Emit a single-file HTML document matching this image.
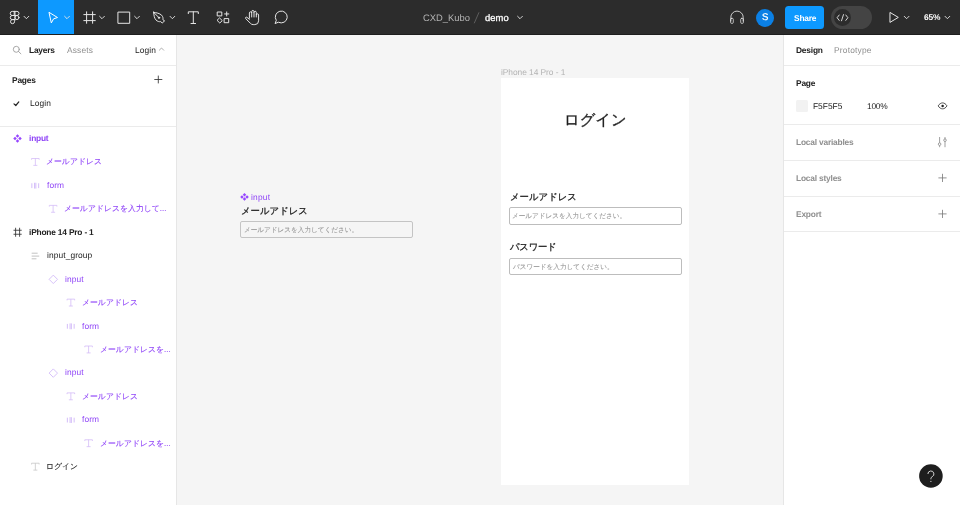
<!DOCTYPE html>
<html lang="ja">
<head>
<meta charset="utf-8">
<style>
*{box-sizing:border-box;margin:0;padding:0}
html,body{width:960px;height:505px;overflow:hidden;background:#f5f5f5;font-family:"Liberation Sans",sans-serif}
.a{position:absolute}
.t{position:absolute;white-space:nowrap;line-height:1;will-change:transform;text-rendering:geometricPrecision}
svg.ov{position:absolute;left:0;top:0;width:960px;height:505px;overflow:visible}
#top{left:0;top:0;width:960px;height:35px;background:#2c2c2c}
#lp{left:0;top:35px;width:177px;height:470px;background:#fff;border-right:1px solid #e6e6e6}
#rp{left:783px;top:35px;width:177px;height:470px;background:#fff;border-left:1px solid #e6e6e6}
.hr{position:absolute;height:1px;background:#ebebeb}
.ui{font-size:8.4px;color:#222;letter-spacing:0.1px}
.b{font-weight:bold;letter-spacing:-0.2px}
.g{color:#8f8f8f}
.p{color:#8f44f7}
.w{color:#fff}
.jl{font-size:9.4px;color:#262626;letter-spacing:0;-webkit-text-stroke:0.3px #262626}
.jp{letter-spacing:0;-webkit-text-stroke:0.1px currentColor}
</style>
</head>
<body>
<!-- TOP BAR -->
<div id="top" class="a">
  <div class="a" style="left:38px;top:0;width:35.5px;height:35px;background:#0d99ff"></div>
  <div class="a" style="left:0;top:34px;width:960px;height:1px;background:#1e1e1e"></div>
  <div class="t" style="left:422.7px;top:12.8px;font-size:9.4px;color:#b3b3b3;letter-spacing:0">CXD_Kubo</div>
  <div class="t w" style="left:484.7px;top:12.8px;font-size:9.4px;letter-spacing:0.05px;-webkit-text-stroke:0.3px #fff">demo</div>
  <div class="a" style="left:755.9px;top:8.5px;width:18px;height:18px;border-radius:50%;background:#0b80e5"></div>
  <div class="t w" style="left:761.8px;top:13.2px;font-size:9.6px;-webkit-text-stroke:0.25px #fff">S</div>
  <div class="a" style="left:784.75px;top:6px;width:39.7px;height:23.4px;border-radius:3.5px;background:#0d99ff"></div>
  <div class="t w b" style="left:793.7px;top:13.7px;font-size:8.4px">Share</div>
  <div class="a" style="left:830.9px;top:5.9px;width:41px;height:23.1px;border-radius:12px;background:#444"></div>
  <div class="a" style="left:833.9px;top:8.5px;width:17.5px;height:17.5px;border-radius:50%;background:#2c2c2c"></div>
  <div class="t w b" style="left:923.7px;top:13.4px;font-size:8.4px">65%</div>
</div>

<!-- LEFT PANEL -->
<div id="lp" class="a"></div>
<div class="hr" style="left:0;top:64.5px;width:176px"></div>
<div class="hr" style="left:0;top:126px;width:176px"></div>
<div class="t ui b" style="left:29.10px;top:45.82px;">Layers</div>
<div class="t ui g" style="left:67.00px;top:45.82px;letter-spacing:0.15px">Assets</div>
<div class="t ui" style="left:134.70px;top:45.82px;">Login</div>
<div class="t ui b" style="left:11.90px;top:75.77px;">Pages</div>
<div class="t ui" style="left:29.60px;top:99.27px;">Login</div>
<div class="t ui p b" style="left:29.10px;top:134.02px;">input</div>
<div class="t ui p jp" style="left:46.45px;top:158.22px;font-size:7.85px;">メールアドレス</div>
<div class="t ui p" style="left:46.85px;top:180.90px;">form</div>
<div class="t ui p jp" style="left:64.20px;top:205.10px;font-size:7.85px;">メールアドレスを入力して...</div>
<div class="t ui b" style="left:29.10px;top:227.78px;">iPhone 14 Pro - 1</div>
<div class="t ui" style="left:46.85px;top:251.22px;">input_group</div>
<div class="t ui p" style="left:64.60px;top:274.66px;">input</div>
<div class="t ui p jp" style="left:81.95px;top:298.86px;font-size:7.85px;">メールアドレス</div>
<div class="t ui p" style="left:82.35px;top:321.54px;">form</div>
<div class="t ui p jp" style="left:99.70px;top:345.74px;font-size:7.85px;">メールアドレスを...</div>
<div class="t ui p" style="left:64.60px;top:368.42px;">input</div>
<div class="t ui p jp" style="left:81.95px;top:392.62px;font-size:7.85px;">メールアドレス</div>
<div class="t ui p" style="left:82.35px;top:415.30px;">form</div>
<div class="t ui p jp" style="left:99.70px;top:439.50px;font-size:7.85px;">メールアドレスを...</div>
<div class="t ui jp" style="left:46.45px;top:462.94px;font-size:7.85px;">ログイン</div>

<!-- RIGHT PANEL -->
<div id="rp" class="a"></div>
<div class="hr" style="left:784px;top:64.5px;width:176px"></div>
<div class="hr" style="left:784px;top:124px;width:176px"></div>
<div class="hr" style="left:784px;top:159.5px;width:176px"></div>
<div class="hr" style="left:784px;top:195.7px;width:176px"></div>
<div class="hr" style="left:784px;top:231.2px;width:176px"></div>
<div class="a" style="left:795.5px;top:100.25px;width:12px;height:12px;background:#f2f2f2;border-radius:1.5px"></div>
<div class="t ui b" style="left:795.90px;top:45.82px;">Design</div>
<div class="t ui g" style="left:834.40px;top:45.82px;letter-spacing:0.2px">Prototype</div>
<div class="t ui b" style="left:795.90px;top:78.62px;">Page</div>
<div class="t ui" style="left:813.40px;top:102.12px;letter-spacing:0">F5F5F5</div>
<div class="t ui" style="left:866.90px;top:102.12px;letter-spacing:-0.25px">100%</div>
<div class="t ui b g" style="left:796.00px;top:138.02px;">Local variables</div>
<div class="t ui b g" style="left:796.00px;top:174.22px;">Local styles</div>
<div class="t ui b g" style="left:796.00px;top:210.42px;">Export</div>

<!-- CANVAS -->
<div class="t ui" style="left:501.00px;top:67.52px;color:#b3b3b3;letter-spacing:-0.05px">iPhone 14 Pro - 1</div>
<div class="t ui p" style="left:251.00px;top:192.92px;letter-spacing:0.2px">input</div>
<div class="a" style="left:501.3px;top:77.8px;width:188.1px;height:407.5px;background:#fff"></div>
<div class="t" style="left:563.7px;top:113px;font-size:15.3px;color:#1e1e1e;-webkit-text-stroke:0.3px #1e1e1e">ログイン</div>
<div class="t jl" style="left:509.6px;top:192px;">メールアドレス</div>
<div class="a" style="left:509.2px;top:207.1px;width:172.4px;height:17.5px;border:1px solid #bdbdbd;border-radius:2px"></div>
<div class="t" style="left:512.4px;top:214.3px;font-size:6.6px;color:#999;letter-spacing:0;-webkit-text-stroke:0.1px #999">メールアドレスを入力してください。</div>
<div class="t jl" style="left:510.2px;top:242.4px;letter-spacing:-0.28px">パスワード</div>
<div class="a" style="left:509.2px;top:257.8px;width:172.4px;height:17.5px;border:1px solid #bdbdbd;border-radius:2px"></div>
<div class="t" style="left:512.6px;top:265px;font-size:6.6px;color:#999;letter-spacing:0;-webkit-text-stroke:0.1px #999">パスワードを入力してください。</div>

<div class="t jl" style="left:240.9px;top:205.8px;">メールアドレス</div>
<div class="a" style="left:240.4px;top:221.3px;width:172.5px;height:16.8px;border:1px solid #c4c4c4;border-radius:2px"></div>
<div class="t" style="left:243.6px;top:228.2px;font-size:6.6px;color:#999;letter-spacing:0;-webkit-text-stroke:0.1px #999">メールアドレスを入力してください。</div>


<svg class="ov" viewBox="0 0 960 505">
 <g fill="none" stroke="#e6e6e6" stroke-width="1" stroke-linecap="round" stroke-linejoin="round">
  <!-- figma logo -->
  <path d="M14.6,11.4 H12.3 a2.05,2.05 0 0 0 0,4.1 H14.6 Z M14.6,11.4 H16.95 a2.05,2.05 0 0 1 0,4.1 H14.6 Z M14.6,15.5 H12.3 a2.05,2.05 0 0 0 0,4.1 H14.6 Z M14.6,19.6 H12.3 a2.05,2.05 0 1 0 2.3,2.05 Z"/>
  <circle cx="16.95" cy="17.55" r="2.05"/>
  <!-- chevrons -->
  <path d="M24,16.3 L26.4,18.7 L28.8,16.3 M64.6,16.3 L67,18.7 L69.4,16.3 M99.6,16.3 L102,18.7 L104.4,16.3 M134.6,16.3 L137,18.7 L139.4,16.3 M170,16.3 L172.4,18.7 L174.8,16.3 M517.6,16.3 L520,18.7 L522.4,16.3 M904.2,16.3 L906.6,18.7 L909,16.3 M945,16.3 L947.4,18.7 L949.8,16.3" stroke-width="0.9"/>
  <!-- cursor -->
  <path d="M49.3,12.5 L57.5,17.5 L53.5,18.9 L51.5,22.6 Z" stroke="#fff"/>
  <!-- frame -->
  <path d="M86.6,11.8 V23.3 M92.6,11.8 V23.3 M83.8,14.6 H95.3 M83.8,20.6 H95.3"/>
  <!-- rect -->
  <rect x="118.3" y="12.1" width="11.4" height="11.2"/>
  <!-- pen -->
  <path d="M153.6,12.3 C156.5,12.8 159.5,13.2 161.6,15.2 C163.2,16.8 163.1,18.6 162.9,19.7 L164.6,20.9 L162.2,23 L160.7,21.6 C159.2,21.9 157.6,21.6 155.9,19.9 C154.2,18.1 153.9,15 153.6,12.3 Z M153.6,12.3 L158.6,17.3"/>
  <circle cx="159" cy="17.7" r="0.7" fill="#e6e6e6"/>
  <!-- text T -->
  <path d="M188.3,13.6 V11.8 H198.3 V13.6 M193.3,11.8 V23.5 M191,23.5 H195.6"/>
  <!-- resources -->
  <rect x="217.6" y="12" width="4.2" height="3.9"/>
  <path d="M226.7,11.9 V16 M224.6,13.95 H228.8"/>
  <path d="M219.8,18.2 L222.3,20.6 L219.8,23 L217.3,20.6 Z"/>
  <rect x="224.5" y="18.6" width="4.2" height="4.1"/>
  <!-- hand -->
  <path d="M249.4,18.2 V13 a1.15,1.15 0 0 1 2.3,0 V11.6 a1.15,1.15 0 0 1 2.3,0 V12.4 a1.15,1.15 0 0 1 2.3,0 V15 a1.15,1.15 0 0 1 2.3,0 V20.8 a3.8,3.8 0 0 1 -3.8,3.8 H253.2 c-1.3,0 -2.1,-0.5 -2.9,-1.4 L245.7,18.6 c-0.7,-0.8 0.3,-1.9 1.2,-1.3 L249.4,19.3 M251.7,13 V17 M254,12.4 V17 M256.3,15 V17"/>
  <!-- comment -->
  <path d="M275.2,23.2 L276.3,20.3 A5.95,5.95 0 1 1 278.7,22.4 Z"/>
  <!-- headphones -->
  <path d="M730.8,21 V17.3 a6.2,6.2 0 0 1 12.4,0 V21" stroke-width="0.85"/><rect x="730.6" y="18.3" width="2.7" height="5.1" rx="1.1" stroke-width="0.75"/><rect x="740.7" y="18.3" width="2.7" height="5.1" rx="1.1" stroke-width="0.75"/>
  <!-- code icon -->
  <path d="M839.2,15 L837.1,17.7 L839.2,20.4 M845.8,15 L847.9,17.7 L845.8,20.4 M843.5,14.6 L841.5,20.8" stroke-width="0.9"/>
  <!-- play -->
  <path d="M890.3,12.6 L898.3,17.4 L890.3,22.2 Z"/>
 </g>
 <!-- slash -->
 <path d="M479,12.3 L474.2,23.3" stroke="#6b6b6b" stroke-width="0.8"/>
 <!-- left panel icons -->
 <g fill="none" stroke="#999" stroke-width="0.85" stroke-linecap="round">
  <circle cx="16.3" cy="49.3" r="3"/>
  <path d="M18.5,51.5 L20.9,53.8"/>
  <path d="M159.3,50.2 L161.5,48 L163.7,50.2" stroke-width="0.8"/>
 </g>
 <path d="M158.3,75.6 V83.4 M154.3,79.5 H162.3" stroke="#333" stroke-width="0.85" fill="none"/>
 <path d="M14,103.9 L15.8,105.5 L18.8,101.9" stroke="#222" stroke-width="1.2" fill="none" stroke-linecap="round" stroke-linejoin="round"/>
<path d="M17.50,134.20 L19.25,135.95 L17.50,137.70 L15.75,135.95Z" fill="#9747ff"/>
<path d="M15.00,136.75 L16.75,138.50 L15.00,140.25 L13.25,138.50Z" fill="#9747ff"/>
<path d="M20.00,136.75 L21.75,138.50 L20.00,140.25 L18.25,138.50Z" fill="#9747ff"/>
<path d="M17.50,139.30 L19.25,141.05 L17.50,142.80 L15.75,141.05Z" fill="#9747ff"/>
<path d="M31.55,159.74 V158.49 H39.15 V159.74 M35.35,158.49 V165.39 M33.35,165.39 H37.35" fill="none" stroke="#d1b8f7" stroke-width="0.75"/>
<path d="M31.85,183.28 V188.08 M38.65,183.28 V188.08 M34.55,182.78 V188.58 M35.85,182.78 V188.58" fill="none" stroke="#c9adf7" stroke-width="0.8"/>
<path d="M49.30,206.62 V205.37 H56.90 V206.62 M53.10,205.37 V212.27 M51.10,212.27 H55.10" fill="none" stroke="#d1b8f7" stroke-width="0.75"/>
<path d="M15.60,227.76 V236.76 M19.60,227.76 V236.76 M13.50,230.26 H21.70 M13.50,234.26 H21.70" fill="none" stroke="#333" stroke-width="0.85"/>
<path d="M31.65,253.20 H37.65 M31.65,256.10 H39.25 M31.65,258.80 H36.45" fill="none" stroke="#b3b3b3" stroke-width="0.8"/>
<path d="M53.30,275.14 L57.50,279.34 L53.30,283.54 L49.10,279.34Z" fill="none" stroke="#cdb3f7" stroke-width="0.8"/>
<path d="M67.05,300.38 V299.13 H74.65 V300.38 M70.85,299.13 V306.03 M68.85,306.03 H72.85" fill="none" stroke="#d1b8f7" stroke-width="0.75"/>
<path d="M67.35,323.92 V328.72 M74.15,323.92 V328.72 M70.05,323.42 V329.22 M71.35,323.42 V329.22" fill="none" stroke="#c9adf7" stroke-width="0.8"/>
<path d="M84.80,347.26 V346.01 H92.40 V347.26 M88.60,346.01 V352.91 M86.60,352.91 H90.60" fill="none" stroke="#d1b8f7" stroke-width="0.75"/>
<path d="M53.30,368.90 L57.50,373.10 L53.30,377.30 L49.10,373.10Z" fill="none" stroke="#cdb3f7" stroke-width="0.8"/>
<path d="M67.05,394.14 V392.89 H74.65 V394.14 M70.85,392.89 V399.79 M68.85,399.79 H72.85" fill="none" stroke="#d1b8f7" stroke-width="0.75"/>
<path d="M67.35,417.68 V422.48 M74.15,417.68 V422.48 M70.05,417.18 V422.98 M71.35,417.18 V422.98" fill="none" stroke="#c9adf7" stroke-width="0.8"/>
<path d="M84.80,441.02 V439.77 H92.40 V441.02 M88.60,439.77 V446.67 M86.60,446.67 H90.60" fill="none" stroke="#d1b8f7" stroke-width="0.75"/>
<path d="M31.55,464.46 V463.21 H39.15 V464.46 M35.35,463.21 V470.11 M33.35,470.11 H37.35" fill="none" stroke="#c4c4c4" stroke-width="0.75"/>
 <!-- right panel icons -->
 <path d="M938.2,105.9 C940.5,101.9 944.6,101.9 947,105.9 C944.6,109.8 940.5,109.8 938.2,105.9 Z" fill="none" stroke="#333" stroke-width="0.85"/>
 <circle cx="942.6" cy="105.9" r="1.25" fill="#222"/>
 <g fill="none" stroke="#777" stroke-width="0.7">
  <path d="M939.6,137 V142.9 M939.6,145.4 V147.2 M945,137 V139 M945,141.4 V147.2"/>
  <circle cx="939.6" cy="144.15" r="1.3" fill="#fff"/>
  <circle cx="945" cy="140.2" r="1.3" fill="#fff"/>
  <path d="M942.5,173.8 V182 M938.4,177.9 H946.6 M942.5,209.8 V218 M938.4,213.9 H946.6" stroke-width="0.8"/>
 </g>
 <!-- canvas component icon -->
 <g fill="#9747ff">
  <path d="M244.5,193.1 L246.25,194.85 L244.5,196.6 L242.75,194.85Z M241.95,195.2 L243.7,196.95 L241.95,198.7 L240.2,196.95Z M247.05,195.2 L248.8,196.95 L247.05,198.7 L245.3,196.95Z M244.5,197.3 L246.25,199.05 L244.5,200.8 L242.75,199.05Z"/>
 </g>
 <!-- help -->
 <circle cx="930.9" cy="476" r="11.8" fill="#1e1e1e"/>
 <path d="M927.9,474 a3,3 0 1 1 4.3,2.7 c-0.9,0.5 -1.3,1 -1.3,2 v0.6" fill="none" stroke="#e6e6e6" stroke-width="0.9"/>
 <circle cx="930.9" cy="481.4" r="0.55" fill="#e6e6e6"/>
</svg>
</body>
</html>
